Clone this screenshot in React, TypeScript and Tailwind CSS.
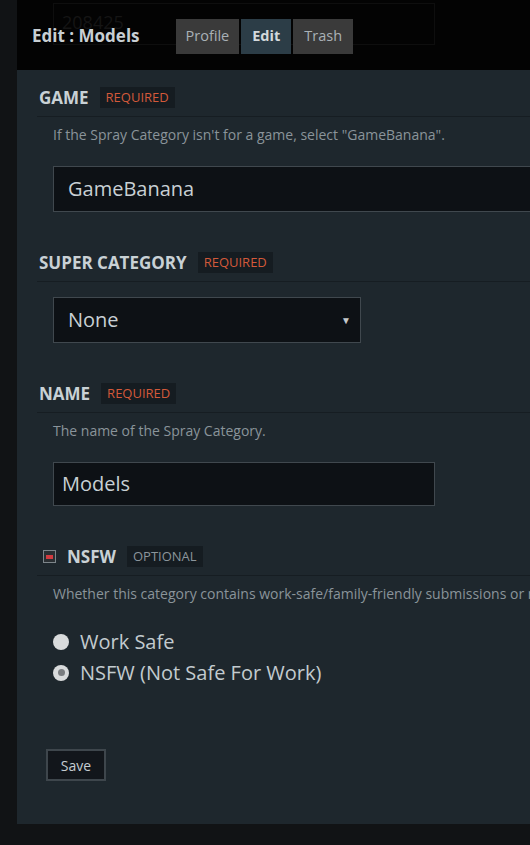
import React from "react";

const font = { fontFamily: '"Open Sans", "Noto Sans", sans-serif' };

function Badge({ children, tone = "req" }: { children: React.ReactNode; tone?: "req" | "opt" }) {
  return (
    <span
      className={
        "ml-[11px] inline-flex h-[21px] items-center bg-[#151c21] px-[6px] text-[13px] uppercase leading-none " +
        (tone === "req" ? "text-[#d3593a]" : "text-[#8b959b]")
      }
    >
      {children}
    </span>
  );
}

function SectionHead({ title, children, icon }: { title: string; children: React.ReactNode; icon?: boolean }) {
  return (
    <div className="ml-[20px] flex h-[30px] items-start border-b border-[#161d22] pl-[2px]">
      <div className="flex h-[21px] items-center">
        {icon && (
          <span className="ml-[4px] mr-[11px] flex h-[13px] w-[13px] items-center justify-center border-[1.5px] border-[#7d858a] bg-[#2a2f33]">
            <span className="h-[4px] w-[7px] bg-[#d23b40]" />
          </span>
        )}
        <span className="text-[17px] font-bold uppercase leading-none text-[#c9d1d5]">{title}</span>
        {children}
      </div>
    </div>
  );
}

function Help({ children }: { children: React.ReactNode }) {
  return <div className="ml-[36px] mt-[9px] whitespace-nowrap text-[14px] leading-[18px] text-[#8a949a]">{children}</div>;
}

function Radio({ checked, label }: { checked?: boolean; label: string }) {
  return (
    <div className="flex h-[31px] items-center">
      <span className="flex h-[16px] w-[16px] items-center justify-center rounded-full bg-[#d9dbdc]">
        {checked && <span className="h-[7px] w-[7px] rounded-full bg-[#7a7d80]" />}
      </span>
      <span className="ml-[11px] text-[20px] leading-none text-[#c3cbcf]">{label}</span>
    </div>
  );
}

export default function App() {
  return (
    <div className="flex h-[845px] w-[530px] overflow-hidden bg-[#111315]" style={font}>
      <div className="w-[17px] shrink-0" />
      <div className="flex min-w-0 flex-1 flex-col">
        <div className="relative flex h-[70px] shrink-0 items-center bg-[#030303]">
          <div className="absolute left-[36px] top-[3px] h-[42px] w-[382px] border border-[#0e0e0e]">
            <span className="absolute left-[8px] top-[9px] text-[18px] leading-none text-[#151515]">208425</span>
          </div>
          <span className="relative ml-[15px] text-[17px] font-bold leading-none text-[#c8cfd3]">Edit : Models</span>
          <div className="relative ml-[36px] mt-[2px] flex gap-[2px]">
            <span className="flex h-[35px] items-center bg-[#3a3a3a] px-[10px] text-[14.5px] text-[#a9b1b6]">Profile</span>
            <span className="flex h-[35px] items-center bg-[#2c3d47] px-[11px] text-[14.5px] font-bold text-[#d3d9dc]">Edit</span>
            <span className="flex h-[35px] items-center bg-[#3a3a3a] px-[11px] text-[14.5px] text-[#a9b1b6]">Trash</span>
          </div>
        </div>

        <div className="flex h-[754px] shrink-0 flex-col bg-[#1e272d] pt-[17px]">
          <SectionHead title="Game">
            <Badge>Required</Badge>
          </SectionHead>
          <Help>If the Spray Category isn't for a game, select "GameBanana".</Help>
          <div className="ml-[36px] mt-[22px] flex h-[46px] w-[500px] shrink-0 items-center border border-[#40484e] bg-[#0d1115] pl-[14px] text-[20px] text-[#c8d0d4]">
            GameBanana
          </div>

          <div className="mt-[40px]">
            <SectionHead title="Super Category">
              <Badge>Required</Badge>
            </SectionHead>
          </div>
          <div className="ml-[36px] mt-[15px] flex h-[46px] w-[308px] shrink-0 items-center justify-between border border-[#40484e] bg-[#0d1115] pl-[14px] pr-[9px] text-[20px] text-[#c8d0d4]">
            <span>None</span>
            <span className="text-[10px] text-[#c5c9cc]">▼</span>
          </div>

          <div className="mt-[40px]">
            <SectionHead title="Name">
              <Badge>Required</Badge>
            </SectionHead>
          </div>
          <Help>The name of the Spray Category.</Help>
          <div className="ml-[36px] mt-[22px] flex h-[44px] w-[382px] shrink-0 items-center border border-[#40484e] bg-[#0d1115] pl-[8px] text-[20px] text-[#c8d0d4]">
            Models
          </div>

          <div className="mt-[40px]">
            <SectionHead title="NSFW" icon>
              <Badge tone="opt">Optional</Badge>
            </SectionHead>
          </div>
          <Help>Whether this category contains work-safe/family-friendly submissions or not.</Help>
          <div className="ml-[36px] mt-[23px] flex flex-col">
            <Radio label="Work Safe" />
            <Radio checked label="NSFW (Not Safe For Work)" />
          </div>

          <div className="ml-[29px] mt-[61px]">
            <button className="flex h-[32px] w-[60px] items-center justify-center border-2 border-[#3e464c] bg-[#12161b] text-[14px] text-[#c5cdd2]">
              Save
            </button>
          </div>
        </div>
        <div className="flex-1" />
      </div>
    </div>
  );
}
